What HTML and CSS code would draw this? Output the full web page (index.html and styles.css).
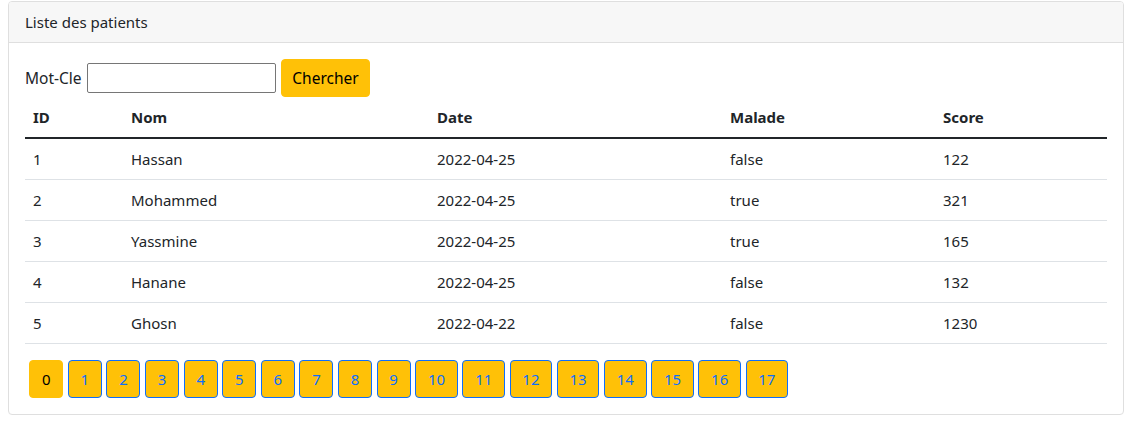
FILE: index.html
```html
<!DOCTYPE html>
<html lang="fr">
<head>
<meta charset="utf-8">
<title>Liste des patients</title>
<link rel="stylesheet" href="styles.css">
</head>
<body>
<div class="page">
  <div class="card">
    <div class="card-header">Liste des patients</div>
    <div class="card-body">
      <form class="search">
        <label class="search-label">Mot-Cle</label>
        <input class="search-input" type="text">
        <button class="btn btn-warning" type="button">Chercher</button>
      </form>
      <table class="table">
        <colgroup>
          <col class="c-id"><col class="c-nom"><col class="c-date"><col class="c-malade"><col class="c-score">
        </colgroup>
        <thead>
          <tr><th>ID</th><th>Nom</th><th>Date</th><th>Malade</th><th>Score</th></tr>
        </thead>
        <tbody>
          <tr><td>1</td><td>Hassan</td><td>2022-04-25</td><td>false</td><td>122</td></tr>
          <tr><td>2</td><td>Mohammed</td><td>2022-04-25</td><td>true</td><td>321</td></tr>
          <tr><td>3</td><td>Yassmine</td><td>2022-04-25</td><td>true</td><td>165</td></tr>
          <tr><td>4</td><td>Hanane</td><td>2022-04-25</td><td>false</td><td>132</td></tr>
          <tr><td>5</td><td>Ghosn</td><td>2022-04-22</td><td>false</td><td>1230</td></tr>
        </tbody>
      </table>
      <ul class="pages">
        <li><a class="page-btn active">0</a></li>
        <li><a class="page-btn">1</a></li>
        <li><a class="page-btn">2</a></li>
        <li><a class="page-btn">3</a></li>
        <li><a class="page-btn">4</a></li>
        <li><a class="page-btn">5</a></li>
        <li><a class="page-btn">6</a></li>
        <li><a class="page-btn">7</a></li>
        <li><a class="page-btn">8</a></li>
        <li><a class="page-btn">9</a></li>
        <li><a class="page-btn wide">10</a></li>
        <li><a class="page-btn wide">11</a></li>
        <li><a class="page-btn wide">12</a></li>
        <li><a class="page-btn wide">13</a></li>
        <li><a class="page-btn wide">14</a></li>
        <li><a class="page-btn wide">15</a></li>
        <li><a class="page-btn wide">16</a></li>
        <li><a class="page-btn wide">17</a></li>
      </ul>
    </div>
  </div>
</div>
</body>
</html>
```

FILE: styles.css
```css
* { box-sizing: border-box; }

html, body {
  margin: 0;
  padding: 0;
  background: #fff;
}

body {
  font-family: "Noto Sans", "Open Sans", sans-serif;
  font-size: 15px;
  line-height: 24px;
  color: #212529;
}

.page {
  padding: 1px 13px 8px 8px;
}

.card {
  border: 1px solid #dfdfdf;
  border-radius: 4px;
  background: #fff;
}

.card-header {
  height: 41px;
  padding: 8px 16px;
  background: #f7f7f7;
  border-bottom: 1px solid #dfdfdf;
  border-radius: 3px 3px 0 0;
}

.card-body {
  padding: 16px;
}

.search {
  display: flex;
  align-items: center;
  height: 38px;
  margin: 0;
}

.search-label {
  width: 62px;
  font-size: 15.5px;
}

.search-input {
  width: 189px;
  height: 30px;
  padding: 1px 2px;
  border: 1px solid #767676;
  border-radius: 2px;
  font: inherit;
  margin-right: 5px;
}

.btn {
  width: 89px;
  height: 38px;
  padding: 6px 0;
  border: 1px solid transparent;
  border-radius: 4px;
  font: inherit;
  font-size: 15.5px;
  color: #000;
  text-align: center;
}

.btn-warning {
  background: #ffc107;
  border-color: #ffc107;
}

.table {
  width: 100%;
  border-collapse: collapse;
  margin-bottom: 16px;
  table-layout: fixed;
}

.c-id { width: 98px; }
.c-nom { width: 306px; }
.c-date { width: 293px; }
.c-malade { width: 213px; }

.table th,
.table td {
  height: 41px;
  padding: 8px;
  text-align: left;
  border-bottom: 1px solid #dee2e6;
  vertical-align: top;
}

.table th {
  font-weight: 700;
  border-bottom: 2px solid #212529;
}

.pages {
  display: flex;
  gap: 4.6px;
  list-style: none;
  margin: 0;
  padding: 0 0 0 4.3px;
}

.page-btn {
  display: block;
  width: 34px;
  height: 38px;
  padding: 6px 0;
  text-align: center;
  border: 1px solid #0d6efd;
  border-radius: 4px;
  background: #ffc107;
  color: #0d6efd;
}

.page-btn.wide {
  width: 42.6px;
}

.page-btn.active {
  border-color: #ffc107;
  color: #000;
}
```
